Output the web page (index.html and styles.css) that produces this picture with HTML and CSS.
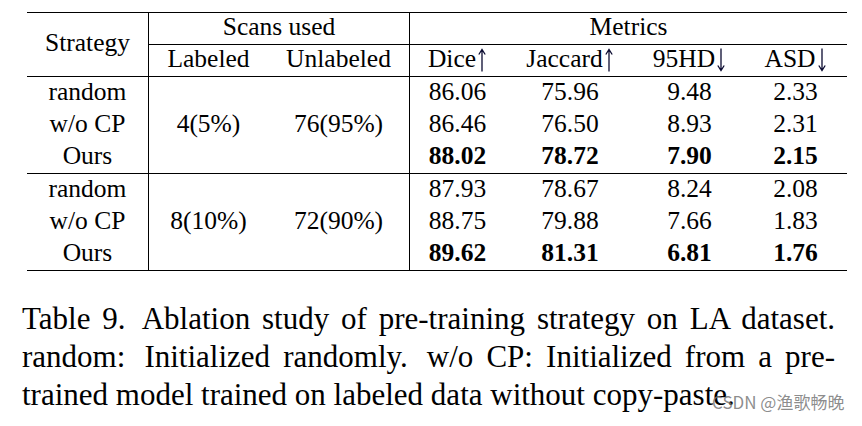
FILE: index.html
```html
<!DOCTYPE html>
<html>
<head>
<meta charset="utf-8">
<link rel="stylesheet" href="styles.css">
</head>
<body>
<div class="page">
  <table class="tbl">
    <colgroup>
      <col class="c-strat"><col class="c-lab"><col class="c-unlab"><col class="c-dice"><col class="c-jac"><col class="c-hd"><col class="c-asd">
    </colgroup>
    <thead>
      <tr class="h1">
        <th rowspan="2" class="strat vr">Strategy</th>
        <th colspan="2" class="grp vr">Scans used</th>
        <th colspan="4" class="grp">Metrics</th>
      </tr>
      <tr class="h2">
        <th>Labeled</th>
        <th class="vr">Unlabeled</th>
        <th>Dice<svg class="arr" viewBox="0 0 10 24" width="10" height="24"><path d="M5 1.5V23.5M1.8 6.5L5 1.5L8.2 6.5" /></svg></th>
        <th>Jaccard<svg class="arr" viewBox="0 0 10 24" width="10" height="24"><path d="M5 1.5V23.5M1.8 6.5L5 1.5L8.2 6.5" /></svg></th>
        <th>95HD<svg class="arr" viewBox="0 0 10 24" width="10" height="24"><path d="M5 0.5V22.5M1.8 17.5L5 22.5L8.2 17.5" /></svg></th>
        <th>ASD<svg class="arr" viewBox="0 0 10 24" width="10" height="24"><path d="M5 0.5V22.5M1.8 17.5L5 22.5L8.2 17.5" /></svg></th>
      </tr>
    </thead>
    <tbody>
      <tr>
        <td class="vr">random</td>
        <td rowspan="3" class="end">4(5%)</td>
        <td rowspan="3" class="end vr">76(95%)</td>
        <td>86.06</td><td>75.96</td><td>9.48</td><td>2.33</td>
      </tr>
      <tr>
        <td class="vr">w/o CP</td>
        <td>86.46</td><td>76.50</td><td>8.93</td><td>2.31</td>
      </tr>
      <tr class="last">
        <td class="vr">Ours</td>
        <td class="b">88.02</td><td class="b">78.72</td><td class="b">7.90</td><td class="b">2.15</td>
      </tr>
    </tbody>
    <tbody>
      <tr>
        <td class="vr">random</td>
        <td rowspan="3" class="end">8(10%)</td>
        <td rowspan="3" class="end vr">72(90%)</td>
        <td>87.93</td><td>78.67</td><td>8.24</td><td>2.08</td>
      </tr>
      <tr>
        <td class="vr">w/o CP</td>
        <td>88.75</td><td>79.88</td><td>7.66</td><td>1.83</td>
      </tr>
      <tr class="last">
        <td class="vr">Ours</td>
        <td class="b">89.62</td><td class="b">81.31</td><td class="b">6.81</td><td class="b">1.76</td>
      </tr>
    </tbody>
  </table>

  <div class="caption">
    <div class="line just">Table 9.<span class="sp"></span> Ablation study of pre-training strategy on LA dataset.</div>
    <div class="line just">random:<span class="sp"></span> Initialized randomly.<span class="sp"></span> w/o CP: Initialized from a pre-</div>
    <div class="line">trained model trained on labeled data without copy-paste.</div>
  </div>

  <div class="watermark">CSDN @渔歌畅晚</div>
</div>
</body>
</html>
```
FILE: styles.css
```css
html, body {
  margin: 0;
  padding: 0;
  background: #ffffff;
}

.page {
  position: relative;
  width: 862px;
  height: 426px;
  padding-top: 12px;
  box-sizing: border-box;
  font-family: "Liberation Serif", "Times New Roman", serif;
  color: #000;
}

.tbl {
  margin-left: 27px;
  width: 820px;
  table-layout: fixed;
  border-collapse: separate;
  border-spacing: 0;
  font-size: 25.5px;
}

.c-strat { width: 122px; }
.c-lab { width: 119px; }
.c-unlab { width: 142px; }
.c-dice { width: 95px; }
.c-jac { width: 130px; }
.c-hd { width: 109px; }
.c-asd { width: 103px; }

.tbl th,
.tbl td {
  padding: 0 0 3px 0;
  text-align: center;
  vertical-align: middle;
  font-weight: normal;
  white-space: nowrap;
  line-height: 29px;
}

.tbl .h1 th {
  border-top: 1px solid #000;
  line-height: 28px;
}

.tbl .h1 .grp {
  border-bottom: 1px solid #000;
}

.tbl .h1 .strat {
  border-bottom: 1px solid #000;
}

.tbl .h2 th {
  border-bottom: 1px solid #000;
  line-height: 28px;
}

.tbl .vr {
  border-right: 1px solid #000;
}

.tbl .last td,
.tbl td.end {
  border-bottom: 1px solid #000;
}

.tbl td.b {
  font-weight: bold;
}

.arr {
  display: inline-block;
  width: 10px;
  height: 24px;
  margin-left: 1px;
  vertical-align: -5px;
}

.arr path {
  fill: none;
  stroke: #0a0a30;
  stroke-width: 1.3;
}

.caption {
  margin: 29px 0 0 22px;
  width: 813px;
  font-size: 31px;
  line-height: 38px;
}

.line {
  white-space: nowrap;
}

.line.just {
  text-align: justify;
  text-align-last: justify;
  white-space: normal;
}

.sp {
  display: inline-block;
  width: 6px;
}

.watermark {
  position: absolute;
  left: 712px;
  top: 391px;
  font-family: "Noto Sans CJK SC", "Noto Sans", sans-serif;
  font-size: 17px;
  line-height: 22px;
  color: rgba(120, 120, 120, 0.85);
}
```
